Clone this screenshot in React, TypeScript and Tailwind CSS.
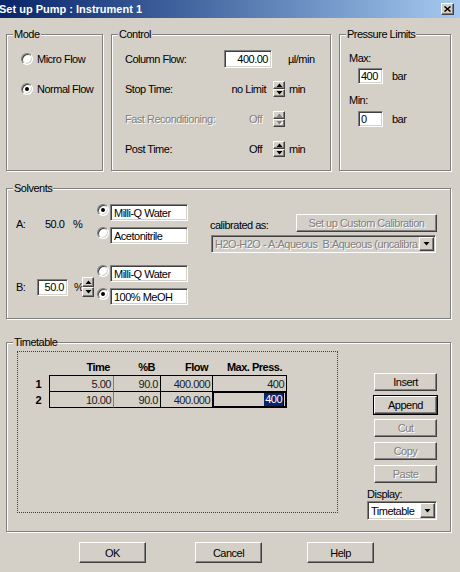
import type { ReactNode } from 'react';

const font = "font-['Liberation_Sans',Arial,sans-serif]";
const raised =
    'bg-[#d4d0c8] border border-t-white border-l-white border-r-[#404040] border-b-[#404040] shadow-[inset_-1px_-1px_0_#808080]';
const sunken =
    'border border-t-[#808080] border-l-[#808080] border-r-white border-b-white shadow-[inset_1px_1px_0_#404040,inset_-1px_-1px_0_#d4d0c8]';
const disabled = 'text-[#808080] [text-shadow:1px_1px_0_#ffffff]';

function GroupBox({ label, className, children }: { label: string; className: string; children: ReactNode }) {
    return (
        <div className={`relative border border-[#808080] shadow-[inset_1px_1px_0_#fff,1px_1px_0_#fff] ${className}`}>
            <span className="absolute -top-[8px] left-[6px] px-[1px] bg-[#d4d0c8] leading-[14px]">{label}</span>
            {children}
        </div>
    );
}

function Radio({ checked = false }: { checked?: boolean }) {
    return (
        <span className="w-[12px] h-[12px] shrink-0 rounded-full border border-t-[#808080] border-l-[#808080] border-b-white border-r-white bg-white shadow-[inset_1px_1px_0_#404040,inset_-1px_-1px_0_#d4d0c8] flex items-center justify-center">
            {checked && <span className="w-[4px] h-[4px] rounded-full bg-black" />}
        </span>
    );
}

function Field({ className, children }: { className: string; children?: ReactNode }) {
    return (
        <div className={`${sunken} bg-white flex items-center overflow-hidden whitespace-nowrap ${className}`}>
            {children}
        </div>
    );
}

function Arrow({ up, off = false }: { up: boolean; off?: boolean }) {
    return (
        <svg width="7" height="4" viewBox="0 0 7 4" className="block">
            {off && <polygon points={up ? '1.5,4.5 4.5,1.5 7.5,4.5' : '1.5,1 7.5,1 4.5,4'} fill="#fff" />}
            <polygon points={up ? '0.5,4 3.5,0.5 6.5,4' : '0.5,0 6.5,0 3.5,3.5'} fill={off ? '#808080' : '#000'} />
        </svg>
    );
}

function Spin({ className = '', off = false, tall = false }: { className?: string; off?: boolean; tall?: boolean }) {
    const half = tall ? 'h-[10px]' : 'h-[8px]';
    return (
        <div className={`flex flex-col w-[12px] shrink-0 ${className}`}>
            <div className={`${raised} ${half} flex items-center justify-center`}>
                <Arrow up off={off} />
            </div>
            <div className={`${raised} ${half} flex items-center justify-center`}>
                <Arrow up={false} off={off} />
            </div>
        </div>
    );
}

function Button({ label, className, off = false, main = false }: { label: string; className: string; off?: boolean; main?: boolean }) {
    return (
        <div className={`${main ? 'outline outline-1 outline-black' : ''} ${raised} flex items-center justify-center ${className}`}>
            <span className={off ? disabled : ''}>{label}</span>
        </div>
    );
}

function DropButton() {
    return (
        <div className={`${raised} w-[15px] h-full flex items-center justify-center shrink-0`}>
            <Arrow up={false} />
        </div>
    );
}

function Cell({ w, children, border = 'border-r-black', focus = false }: { w: string; children: ReactNode; border?: string; focus?: boolean }) {
    return (
        <div className={`${w} h-[16px] border-b border-r border-b-black ${border} bg-[#d4d0c8] flex items-center justify-end pr-[2px] text-[#202020] ${focus ? 'shadow-[inset_0_0_0_1px_#000]' : ''}`}>
            {children}
        </div>
    );
}

export default function App() {
    return (
        <div className={`w-[460px] h-[572px] bg-[#d4d0c8] overflow-hidden flex flex-col ${font} text-[11px] tracking-[-0.5px] leading-[14px] text-black whitespace-nowrap`}>
            {/* Title bar */}
            <div className="h-[18px] shrink-0 flex items-center justify-between bg-gradient-to-r from-[#0a246a] to-[#a6caf0]">
                <span className="-ml-[1px] text-white font-bold text-[11px] tracking-normal">Set up Pump : Instrument 1</span>
                <div className={`${raised} w-[13px] h-[12px] mr-[6px] flex items-center justify-center`}>
                    <svg width="7" height="6" viewBox="0 0 7 6">
                        <path d="M0.5 0.5 L6.5 5.5 M6.5 0.5 L0.5 5.5" stroke="#000" strokeWidth="1.5" />
                    </svg>
                </div>
            </div>

            {/* Mode / Control / Pressure */}
            <div className="flex mt-[16px] ml-[6px]">
                <GroupBox label="Mode" className="w-[97px] h-[137px]">
                    <div className="flex flex-col gap-[14px] pt-[16px] pl-[14px]">
                        <div className="flex items-center h-[16px] gap-[4px]">
                            <Radio />
                            <span>Micro Flow</span>
                        </div>
                        <div className="flex items-center h-[16px] gap-[4px]">
                            <Radio checked />
                            <span>Normal Flow</span>
                        </div>
                    </div>
                </GroupBox>

                <GroupBox label="Control" className="w-[220px] h-[137px] ml-[8px]">
                    <div className="flex flex-col gap-[12px] pt-[15px] pl-[13px]">
                        <div className="flex items-center h-[18px]">
                            <span className="w-[99px]">Column Flow:</span>
                            <Field className="w-[48px] h-[18px] justify-end pr-[3px]">400.00</Field>
                            <span className="ml-[16px]">µl/min</span>
                        </div>
                        <div className="flex items-center h-[18px]">
                            <span className="w-[99px]">Stop Time:</span>
                            <span className="w-[44px] text-right pr-[2px]">no Limit</span>
                            <Spin className="ml-[5px]" />
                            <span className="ml-[4px]">min</span>
                        </div>
                        <div className="flex items-center h-[18px]">
                            <span className={`w-[99px] ${disabled}`}>Fast Reconditioning:</span>
                            <span className={`w-[44px] text-right pr-[6px] ${disabled}`}>Off</span>
                            <Spin className="ml-[5px]" off />
                        </div>
                        <div className="flex items-center h-[18px]">
                            <span className="w-[99px]">Post Time:</span>
                            <span className="w-[44px] text-right pr-[6px]">Off</span>
                            <Spin className="ml-[5px]" />
                            <span className="ml-[4px]">min</span>
                        </div>
                    </div>
                </GroupBox>

                <GroupBox label="Pressure Limits" className="w-[112px] h-[137px] ml-[8px]">
                    <div className="flex flex-col pt-[16px] pl-[9px]">
                        <span>Max:</span>
                        <div className="flex items-center mt-[3px] ml-[9px]">
                            <Field className="w-[25px] h-[16px] pl-[2px]">400</Field>
                            <span className="ml-[9px]">bar</span>
                        </div>
                        <span className="mt-[9px]">Min:</span>
                        <div className="flex items-center mt-[4px] ml-[9px]">
                            <Field className="w-[25px] h-[16px] pl-[2px]">0</Field>
                            <span className="ml-[9px]">bar</span>
                        </div>
                    </div>
                </GroupBox>
            </div>

            {/* Solvents */}
            <GroupBox label="Solvents" className="w-[445px] h-[131px] mt-[17px] ml-[6px]">
                <div className="flex flex-col pt-[15px]">
                    <div className="flex h-[40px]">
                        <div className="w-[90px] h-[40px] flex items-center pl-[9px]">
                            <span className="w-[29px]">A:</span>
                            <span className="w-[28px]">50.0</span>
                            <span>%</span>
                        </div>
                        <div className="flex flex-col gap-[6px]">
                            <div className="flex items-start">
                                <Radio checked />
                                <Field className="w-[78px] h-[17px] ml-[1px] pl-[3px]">Milli-Q Water</Field>
                            </div>
                            <div className="flex items-start">
                                <Radio />
                                <Field className="w-[78px] h-[17px] ml-[1px] pl-[3px]">Acetonitrile</Field>
                            </div>
                        </div>
                        <div className="flex flex-col ml-[22px] pt-[10px]">
                            <div className="flex items-end justify-between w-[227px] h-[18px]">
                                <span>calibrated as:</span>
                                <Button label="Set up Custom Calibration" className="w-[141px] h-[18px]" off />
                            </div>
                            <div className={`${sunken} bg-[#d4d0c8] w-[225px] h-[19px] ml-[1px] mt-[3px] flex items-stretch p-[1px]`}>
                                <span className={`flex-1 pl-[2px] overflow-hidden flex items-center ${disabled}`}>
                                    H2O-H2O - A:Aqueous&nbsp; B:Aqueous (uncalibra
                                </span>
                                <DropButton />
                            </div>
                        </div>
                    </div>

                    <div className="flex h-[40px] mt-[21px]">
                        <div className="w-[90px] h-[40px] flex items-center pl-[9px] pt-[4px]">
                            <span className="w-[21px]">B:</span>
                            <Field className="w-[31px] h-[17px] justify-end pr-[3px]">50.0</Field>
                            <span className="w-[8px] ml-[6px]">%</span>
                            <Spin tall />
                        </div>
                        <div className="flex flex-col gap-[6px]">
                            <div className="flex items-start">
                                <Radio />
                                <Field className="w-[78px] h-[17px] ml-[1px] pl-[3px]">Milli-Q Water</Field>
                            </div>
                            <div className="flex items-start">
                                <Radio checked />
                                <Field className="w-[78px] h-[17px] ml-[1px] pl-[3px]">100% MeOH</Field>
                            </div>
                        </div>
                    </div>
                </div>
            </GroupBox>

            {/* Timetable */}
            <GroupBox label="Timetable" className="w-[445px] h-[190px] mt-[23px] ml-[6px]">
                <div className="flex pt-[8px] pl-[10px]">
                    <div className="w-[321px] h-[162px] border border-dotted border-[#404040] pt-[7px]">
                        <div className="flex h-[16px] items-center font-bold">
                            <span className="w-[32px]" />
                            <span className="w-[64px] text-right pr-[4px]">Time</span>
                            <span className="w-[47px] text-right pr-[6px]">%B</span>
                            <span className="w-[52px] text-right pr-[5px]">Flow</span>
                            <span className="w-[74px] text-right pr-[5px]">Max. Press.</span>
                        </div>
                        <div className="flex">
                            <div className="w-[31px] flex flex-col pt-[1px] font-bold">
                                <span className="h-[16px] flex items-center justify-end pr-[8px]">1</span>
                                <span className="h-[16px] flex items-center justify-end pr-[8px]">2</span>
                            </div>
                            <div className="border-l border-t border-black flex flex-col">
                                <div className="flex">
                                    <Cell w="w-[64px]" border="border-r-[#808080]">5.00</Cell>
                                    <Cell w="w-[47px]">90.0</Cell>
                                    <Cell w="w-[52px]">400.000</Cell>
                                    <Cell w="w-[74px]">400</Cell>
                                </div>
                                <div className="flex">
                                    <Cell w="w-[64px]" border="border-r-[#808080]">10.00</Cell>
                                    <Cell w="w-[47px]">90.0</Cell>
                                    <Cell w="w-[52px]">400.000</Cell>
                                    <Cell w="w-[74px]" focus>
                                        <span className="bg-[#0a246a] text-white px-[1px] leading-[13px]">400</span>
                                        <span className="w-[1px] h-[13px] bg-black" />
                                    </Cell>
                                </div>
                            </div>
                        </div>
                    </div>

                    <div className="w-[70px] ml-[29px] flex flex-col pt-[22px]">
                        <div className="flex flex-col gap-[5px] ml-[7px]">
                            <Button label="Insert" className="w-[63px] h-[18px]" />
                            <Button label="Append" className="w-[63px] h-[18px]" main />
                            <Button label="Cut" className="w-[63px] h-[18px]" off />
                            <Button label="Copy" className="w-[63px] h-[18px]" off />
                            <Button label="Paste" className="w-[63px] h-[18px]" off />
                        </div>
                        <span className="mt-[4px]">Display:</span>
                        <div className={`${sunken} bg-white w-[70px] h-[19px] flex items-stretch p-[1px]`}>
                            <span className="flex-1 pl-[2px] flex items-center">Timetable</span>
                            <DropButton />
                        </div>
                    </div>
                </div>
            </GroupBox>

            {/* Dialog buttons */}
            <div className="flex mt-[10px] pl-[79px]">
                <Button label="OK" className="w-[67px] h-[21px]" />
                <Button label="Cancel" className="w-[67px] h-[21px] ml-[49px]" />
                <Button label="Help" className="w-[67px] h-[21px] ml-[45px]" />
            </div>
        </div>
    );
}
